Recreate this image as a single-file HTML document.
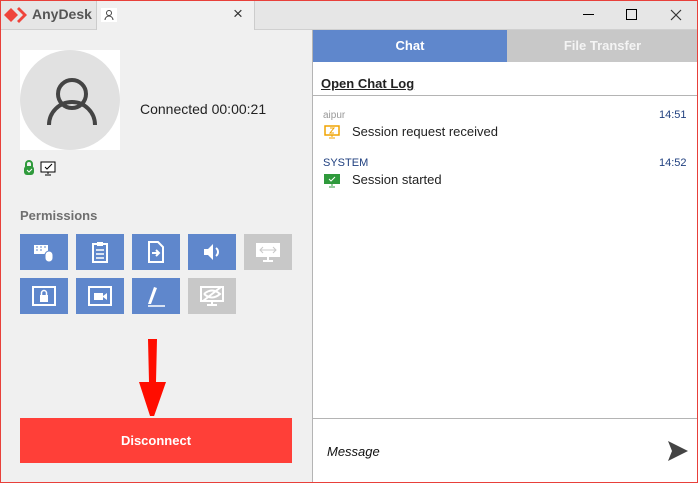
<!DOCTYPE html>
<html><head><meta charset="utf-8"><style>
*{margin:0;padding:0;box-sizing:border-box}
body{width:698px;height:483px;overflow:hidden;font-family:"Liberation Sans",sans-serif;background:#f0f0f0;position:relative}
.frame{position:absolute;left:0;top:0;width:698px;height:483px;border:1px solid #e8403a;pointer-events:none;z-index:10}
.title{position:absolute;left:0;top:0;width:698px;height:30px;background:#e6e6e6;border-bottom:1px solid #d0d0d0}
.tab{position:absolute;left:96px;top:1px;width:159px;height:30px;background:#f0f0f0;border-left:1px solid #ccc;border-right:1px solid #ccc}
.left{position:absolute;left:1px;top:30px;width:311px;height:452px;background:#f0f0f0}
.right{position:absolute;left:312px;top:30px;width:385px;height:452px;background:#fff;border-left:1px solid #b4b4b4}
.pb{position:absolute;width:48px;height:36px;background:#5f87cc}
.pb.g{background:#c8c8c8}
.pb svg{position:absolute;left:12px;top:6px}
</style></head><body>
<div class="title"></div>
<svg style="position:absolute;left:4px;top:7px" width="26" height="16" viewBox="0 0 26 16"><path d="M0 8L7 1L14 8L7 15Z" fill="#ef443b"/><path d="M13 2L15 0L23 8L15 16L13 14L19 8Z" fill="#ef443b"/></svg>
<div style="position:absolute;left:32px;top:6px;font-size:14px;font-weight:bold;color:#555">AnyDesk</div>
<div class="tab"></div>
<div style="position:absolute;left:101px;top:8px;width:16px;height:14px;background:#fff"></div>
<svg style="position:absolute;left:104px;top:9px" width="10" height="12" viewBox="0 0 10 12"><circle cx="5" cy="4" r="2.5" fill="none" stroke="#444"/><path d="M1 11a4 4 0 0 1 8 0" fill="none" stroke="#444"/></svg>
<div style="position:absolute;left:233px;top:4px;font-size:17px;color:#333">×</div>
<div style="position:absolute;left:583px;top:14px;width:11px;height:1px;background:#000"></div>
<div style="position:absolute;left:626px;top:9px;width:11px;height:11px;border:1px solid #000"></div>
<svg style="position:absolute;left:670px;top:9px" width="12" height="12"><path d="M1 1L11 11M11 1L1 11" stroke="#333" stroke-width="1.2"/></svg>
<div class="left">
 <div style="position:absolute;left:19px;top:20px;width:100px;height:100px;background:#fff"><div style="position:absolute;left:0;top:0;width:100px;height:100px;border-radius:50%;background:#e1e1e1"></div>
 <svg style="position:absolute;left:0;top:0" width="100" height="100"><circle cx="52" cy="44" r="14" fill="none" stroke="#444" stroke-width="4"/><path d="M29 75a23 23 0 0 1 46 0" fill="none" stroke="#444" stroke-width="4"/></svg></div>
 <div style="position:absolute;left:139px;top:71px;font-size:14px;color:#222">Connected 00:00:21</div>
 <svg style="position:absolute;left:22px;top:130px" width="34" height="16"><rect x="1" y="6" width="10" height="9" rx="3" fill="#2f9a3c"/><path d="M3 7V4a3 3 0 0 1 6 0v3" fill="none" stroke="#2f9a3c" stroke-width="2"/><path d="M4 10l2 2 3-3" stroke="#fff" fill="none"/><rect x="18" y="2" width="14" height="10" fill="#fff" stroke="#000"/><path d="M22 7l2 2 5-5" stroke="#000" fill="none"/><path d="M25 12v2M22 15h6" stroke="#000"/></svg>
 <div style="position:absolute;left:19px;top:178px;font-size:13px;font-weight:bold;color:#6f6f6f">Permissions</div>
</div>
<div class="pb" style="left:20px;top:234px"><svg width="24" height="24"><rect x="2" y="5" width="14" height="9" fill="#fff"/><path d="M4 7h2M8 7h2M12 7h2M4 10h2M8 10h2" stroke="#5f87cc"/><rect x="13" y="11" width="8" height="11" rx="4" fill="#fff" stroke="#5f87cc"/></svg></div>
<div class="pb" style="left:76px;top:234px"><svg width="24" height="24"><rect x="5" y="4" width="14" height="18" fill="none" stroke="#fff" stroke-width="2"/><rect x="9" y="2" width="6" height="4" fill="#fff"/><path d="M8 10h8M8 14h8M8 18h8" stroke="#fff" stroke-width="1.5"/></svg></div>
<div class="pb" style="left:132px;top:234px"><svg width="24" height="24"><path d="M5 2h9l5 5v15H5Z" fill="none" stroke="#fff" stroke-width="2"/><path d="M8 13h7M12 10l3 3-3 3" stroke="#fff" stroke-width="2" fill="none"/></svg></div>
<div class="pb" style="left:188px;top:234px"><svg width="24" height="24"><path d="M4 9h4l5-5v16l-5-5H4Z" fill="#fff"/><path d="M16 8a5 5 0 0 1 0 8" stroke="#fff" stroke-width="2" fill="none"/></svg></div>
<div class="pb g" style="left:244px;top:234px"><svg width="24" height="24"><rect x="0" y="3" width="24" height="14" fill="#fff"/><path d="M4 10h16M7 7l-3 3 3 3M17 7l3 3-3 3" stroke="#c8c8c8" fill="none"/><path d="M12 17v3M7 21h10" stroke="#fff" stroke-width="2"/></svg></div>
<div class="pb" style="left:20px;top:278px"><svg width="24" height="24"><rect x="1" y="3" width="22" height="18" fill="none" stroke="#fff" stroke-width="2"/><rect x="8" y="11" width="8" height="7" fill="#fff"/><path d="M9.5 11V9a2.5 2.5 0 0 1 5 0v2" stroke="#fff" stroke-width="1.5" fill="none"/></svg></div>
<div class="pb" style="left:76px;top:278px"><svg width="24" height="24"><rect x="1" y="3" width="22" height="18" fill="none" stroke="#fff" stroke-width="2"/><rect x="6" y="9" width="9" height="7" fill="#fff"/><path d="M15 12l4-3v7l-4-3Z" fill="#fff"/></svg></div>
<div class="pb" style="left:132px;top:278px"><svg width="24" height="24"><path d="M4 20L10 3l3 1-6 16Z" fill="#fff"/><path d="M4 22h17" stroke="#fff" stroke-width="1.5"/></svg></div>
<div class="pb g" style="left:188px;top:278px"><svg width="24" height="24"><rect x="1" y="3" width="22" height="14" fill="none" stroke="#fff" stroke-width="2"/><path d="M4 10q8-7 16 0q-8 7-16 0M3 17L21 3" stroke="#fff" stroke-width="2" fill="none"/><path d="M12 17v3M7 21h10" stroke="#fff" stroke-width="2"/></svg></div>
<svg style="position:absolute;left:136px;top:338px" width="40" height="78"><path d="M12 1h9l-1 43h10l-14 40L3 44h10Z" fill="#ff0d00"/></svg>
<div style="position:absolute;left:20px;top:418px;width:272px;height:45px;background:#ff3f38;color:#fff;font-size:13px;font-weight:bold;text-align:center;line-height:45px">Disconnect</div>
<div class="right">
 <div style="position:absolute;left:0;top:0;width:194px;height:32px;background:#5f87cc;color:#fff;font-size:13px;font-weight:bold;text-align:center;line-height:32px">Chat</div>
 <div style="position:absolute;left:194px;top:0;width:191px;height:32px;background:#c8c8c8;color:#f4f4f4;font-size:13px;font-weight:bold;text-align:center;line-height:32px">File Transfer</div>
 <div style="position:absolute;left:0;top:65px;width:385px;height:1px;background:#b4b4b4"></div>
 <div style="position:absolute;left:8px;top:46px;font-size:13px;font-weight:bold;color:#222;text-decoration:underline">Open Chat Log</div>
 <div style="position:absolute;left:10px;top:80px;font-size:10px;color:#999">aipur</div>
 <div style="position:absolute;left:346px;top:79px;font-size:11px;color:#1f3f7f">14:51</div>
 <svg style="position:absolute;left:11px;top:95px" width="16" height="14"><rect x="1" y="1" width="14" height="9" fill="none" stroke="#f0a300" stroke-width="1.5"/><path d="M6 3h4L6 8h4" stroke="#f0a300" fill="none"/><path d="M8 10v2M5 13h6" stroke="#f0a300"/></svg>
 <div style="position:absolute;left:39px;top:94px;font-size:13px;color:#222">Session request received</div>
 <div style="position:absolute;left:10px;top:127px;font-size:11px;color:#1f3f7f">SYSTEM</div>
 <div style="position:absolute;left:346px;top:127px;font-size:11px;color:#1f3f7f">14:52</div>
 <svg style="position:absolute;left:11px;top:144px" width="16" height="14"><rect x="0" y="0" width="16" height="10" fill="#2f9a3c"/><path d="M5 5l2 2 4-4" stroke="#fff" fill="none"/><path d="M8 10v2M5 13h6" stroke="#2f9a3c"/></svg>
 <div style="position:absolute;left:39px;top:142px;font-size:13px;color:#222">Session started</div>
 <div style="position:absolute;left:0;top:388px;width:385px;height:1px;background:#b4b4b4"></div>
 <div style="position:absolute;left:14px;top:414px;font-size:13px;font-style:italic;color:#111">Message</div>
 <svg style="position:absolute;left:354px;top:410px" width="22" height="22"><path d="M1 1L21 11L1 21L5 11Z" fill="#444"/></svg>
</div>
<div class="frame"></div>
</body></html>
